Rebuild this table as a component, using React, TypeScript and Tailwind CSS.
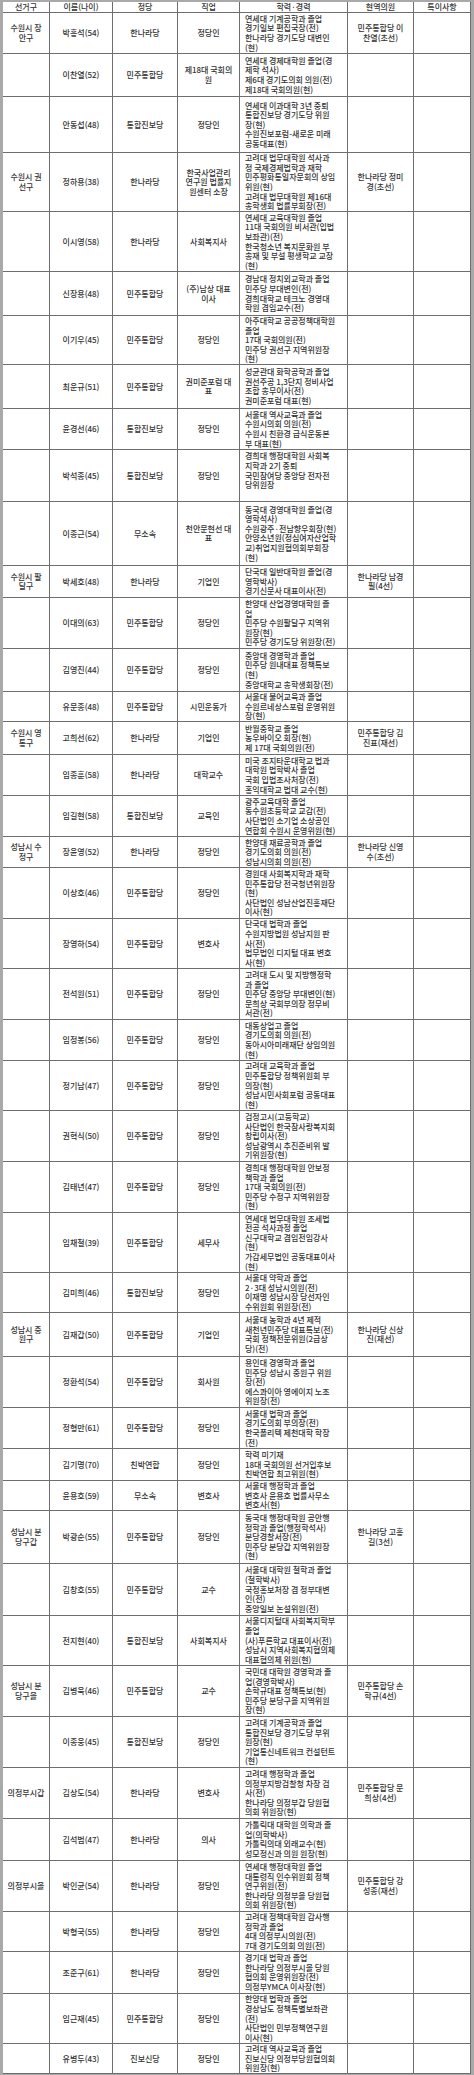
import React from "react";

type Row = {
  h: number;
  d?: string[];
  n: string;
  p: string;
  j: string[];
  e: string[];
  c?: string[];
};

const rows: Row[] = [
  { h: 41, d: ["수원시 장", "안구"], n: "박흥석(54)", p: "한나라당", j: ["정당인"], e: ["연세대 기계공학과 졸업", "경기일보 편집국장(전)", "한나라당 경기도당 대변인", "(현)"], c: ["민주통합당 이", "찬열(초선)"] },
  { h: 43, n: "이찬열(52)", p: "민주통합당", j: ["제18대 국회의", "원"], e: ["연세대 경제대학원 졸업(경", "제학 석사)", "제6대 경기도의회 의원(전)", "제18대 국회의원(현)"] },
  { h: 56, n: "안동섭(48)", p: "통합진보당", j: ["정당인"], e: ["연세대 이과대학 3년 중퇴", "통합진보당 경기도당 위원", "장(현)", "수원진보포럼-새로운 미래", "공동대표(현)"] },
  { h: 59, d: ["수원시 권", "선구"], n: "정하용(38)", p: "한나라당", j: ["한국사업관리", "연구원 법률지", "원센터 소장"], e: ["고려대 법무대학원 석사과", "정 국제경제법학과 재학", "민주평화통일자문회의 상임", "위원(현)", "고려대 법무대학원 제16대", "총학생회 법률부회장(전)"], c: ["한나라당 정미", "경(초선)"] },
  { h: 60, n: "이시영(58)", p: "한나라당", j: ["사회복지사"], e: ["연세대 교육대학원 졸업", "11대 국회의원 비서관(입법", "보좌관)(전)", "한국청소년 복지문화원 부", "총재 및 부설 평생학교 교장", "(현)"] },
  { h: 44, n: "신장용(48)", p: "민주통합당", j: ["(주)남상 대표", "이사"], e: ["경남대 정치외교학과 졸업", "민주당 부대변인(전)", "경희대학교 테크노 경영대", "학원 겸임교수(전)"] },
  { h: 47, n: "이기우(45)", p: "민주통합당", j: ["정당인"], e: ["아주대학교 공공정책대학원", "졸업", "17대 국회의원(전)", "민주당 권선구 지역위원장", "(현)"] },
  { h: 44, n: "최운규(51)", p: "민주통합당", j: ["권미준포럼 대", "표"], e: ["성균관대 화학공학과 졸업", "권선주공 1,3단지 정비사업", "조합 총무이사(전)", "권미준포럼 대표(현)"] },
  { h: 41, n: "윤경선(46)", p: "통합진보당", j: ["정당인"], e: ["서울대 역사교육과 졸업", "수원시의회 의원(전)", "수원시 친환경 급식운동본", "부 대표(현)"] },
  { h: 52, n: "박석종(45)", p: "통합진보당", j: ["정당인"], e: ["경희대 행정대학원 사회복", "지학과 2기 중퇴", "국민참여당 중앙당 전자전", "당위원장", "\u00a0"] },
  { h: 64, n: "이종근(54)", p: "무소속", j: ["천안문현선 대", "표"], e: ["동국대 경영대학원 졸업(경", "영학석사)", "수원광주·전남향우회장(현)", "안양소년원(정심여자산업학", "교)취업지원협의회부회장", "(현)"] },
  { h: 32, d: ["수원시 팔", "달구"], n: "박세호(48)", p: "한나라당", j: ["기업인"], e: ["단국대 일반대학원 졸업(경", "영학박사)", "경기신문사 대표이사(전)"], c: ["한나라당 남경", "필(4선)"] },
  { h: 51, n: "이대의(63)", p: "민주통합당", j: ["정당인"], e: ["한양대 산업경영대학원 졸", "업", "민주당 수원팔달구 지역위", "원장(현)", "민주당 경기도당 위원장(전)"] },
  { h: 43, n: "김영진(44)", p: "민주통합당", j: ["정당인"], e: ["중앙대 경영학과 졸업", "민주당 원내대표 정책특보", "(현)", "중앙대학교 총학생회장(전)"] },
  { h: 30, n: "유문종(48)", p: "민주통합당", j: ["시민운동가"], e: ["서울대 불어교육과 졸업", "수원르네상스포럼 운영위원", "장(현)"] },
  { h: 33, d: ["수원시 영", "통구"], n: "고희선(62)", p: "한나라당", j: ["기업인"], e: ["반월중학교 졸업", "농우바이오 회장(현)", "제 17대 국회의원(전)"], c: ["민주통합당 김", "진표(재선)"] },
  { h: 41, n: "임종훈(58)", p: "한나라당", j: ["대학교수"], e: ["미국 조지타운대학교 법과", "대학원 법학박사 졸업", "국회 입법조사처장(전)", "홍익대학교 법대 교수(현)"] },
  { h: 41, n: "임길현(58)", p: "통합진보당", j: ["교육인"], e: ["광주교육대학 졸업", "동수원초등학교 교감(전)", "사단법인 소기업 소상공인", "연합회 수원시 운영위원(현)"] },
  { h: 31, d: ["성남시 수", "정구"], n: "장윤영(52)", p: "한나라당", j: ["정당인"], e: ["한양대 재료공학과 졸업", "경기도의회 의원(전)", "성남시의회 의원(전)"], c: ["한나라당 신영", "수(초선)"] },
  { h: 51, n: "이상호(46)", p: "민주통합당", j: ["정당인"], e: ["경원대 사회복지학과 재학", "민주통합당 전국청년위원장", "(현)", "사단법인 성남산업진흥재단", "이사(현)"] },
  { h: 50, n: "장영하(54)", p: "민주통합당", j: ["변호사"], e: ["단국대 법학과 졸업", "수원지방법원 성남지원 판", "사(전)", "법무법인 디지털 대표 변호", "사(현)"] },
  { h: 51, n: "전석원(51)", p: "민주통합당", j: ["정당인"], e: ["고려대 도시 및 지방행정학", "과 졸업", "민주당 중앙당 부대변인(현)", "문희상 국회부의장 정무비", "서관(전)"] },
  { h: 41, n: "임정봉(56)", p: "민주통합당", j: ["정당인"], e: ["대동상업고 졸업", "경기도의회 의원(전)", "동아시아미래재단 상임의원", "(현)"] },
  { h: 50, n: "정기남(47)", p: "민주통합당", j: ["정당인"], e: ["고려대 교육학과 졸업", "민주통합당 정책위원회 부", "의장(현)", "성남시민사회포럼 공동대표", "(현)"] },
  { h: 51, n: "권혁식(50)", p: "민주통합당", j: ["정당인"], e: ["검정고시(고등학교)", "사단법인 한국참사랑복지회", "창립이사(전)", "성남광역시 추진준비위 발", "기위원장(현)"] },
  { h: 51, n: "김태년(47)", p: "민주통합당", j: ["정당인"], e: ["경희대 행정대학원 안보정", "책학과 졸업", "17대 국회의원(전)", "민주당 수정구 지역위원장", "(현)"] },
  { h: 60, n: "임채철(39)", p: "민주통합당", j: ["세무사"], e: ["연세대 법무대학원 조세법", "전공 석사과정 졸업", "신구대학교 겸임전임강사", "(현)", "가감세무법인 공동대표이사", "(현)"] },
  { h: 40, n: "김미희(46)", p: "통합진보당", j: ["정당인"], e: ["서울대 약학과 졸업", "2·3대 성남시의원(전)", "이재명 성남시장 당선자인", "수위원회 위원장(전)"] },
  { h: 44, d: ["성남시 중", "원구"], n: "김재갑(50)", p: "민주통합당", j: ["기업인"], e: ["서울대 농학과 4년 제적", "새천년민주당 대표특보(전)", "국회 정책전문위원(2급상", "당)(전)"], c: ["한나라당 신상", "진(재선)"] },
  { h: 51, n: "정환석(54)", p: "민주통합당", j: ["회사원"], e: ["용인대 경영학과 졸업", "민주당 성남시 중원구 위원", "장(전)", "에스콰이아 영에이지 노조", "위원장(전)"] },
  { h: 41, n: "정형만(61)", p: "민주통합당", j: ["정당인"], e: ["서울대 법학과 졸업", "경기도의회 부의장(전)", "한국폴리텍 제천대학 학장", "(전)"] },
  { h: 32, n: "김기명(70)", p: "친박연합", j: ["정당인"], e: ["학력 미기재", "18대 국회의원 선거입후보", "친박연합 최고위원(현)"] },
  { h: 30, n: "윤용호(59)", p: "무소속", j: ["변호사"], e: ["서울대 행정학과 졸업", "변호사 윤용호 법률사무소", "변호사(현)"] },
  { h: 53, d: ["성남시 분", "당구갑"], n: "박광순(55)", p: "민주통합당", j: ["정당인"], e: ["동국대 행정대학원 공안행", "정학과 졸업(행정학석사)", "분당경찰서장(전)", "민주당 분당갑 지역위원장", "(현)"], c: ["한나라당 고흥", "길(3선)"] },
  { h: 52, n: "김창호(55)", p: "민주통합당", j: ["교수"], e: ["서울대 대학원 철학과 졸업", "(철학박사)", "국정홍보처장 겸 정부대변", "인(전)", "중앙일보 논설위원(전)"] },
  { h: 50, n: "전지현(40)", p: "통합진보당", j: ["사회복지사"], e: ["서울디지털대 사회복지학부", "졸업", "(사)푸른학교 대표이사(전)", "성남시 지역사회복지협의체", "대표협의체 위원(현)"] },
  { h: 51, d: ["성남시 분", "당구을"], n: "김병욱(46)", p: "민주통합당", j: ["교수"], e: ["국민대 대학원 경영학과 졸", "업(경영학박사)", "손학규대표 정책특보(현)", "민주당 분당구을 지역위원", "장(현)"], c: ["민주통합당 손", "학규(4선)"] },
  { h: 51, n: "이종웅(45)", p: "통합진보당", j: ["정당인"], e: ["고려대 기계공학과 졸업", "통합진보당 경기도당 부위", "원장(현)", "기업통신네트워크 컨설턴트", "(현)"] },
  { h: 51, d: ["의정부시갑"], n: "김상도(54)", p: "한나라당", j: ["변호사"], e: ["고려대 행정학과 졸업", "의정부지방검찰청 차장 검", "사(전)", "한나라당 의정부갑 당원협", "의회 위원장(현)"], c: ["민주통합당 문", "희상(4선)"] },
  { h: 42, n: "김석범(47)", p: "한나라당", j: ["의사"], e: ["가톨릭대 대학원 의학과 졸", "업(의학박사)", "가톨릭의대 외래교수(현)", "성모정신과 의원 원장(현)"] },
  { h: 51, d: ["의정부시을"], n: "박인균(54)", p: "한나라당", j: ["정당인"], e: ["연세대 행정대학원 졸업", "대통령직 인수위원회 정책", "연구위원(전)", "한나라당 의정부을 당원협", "의회 위원장(현)"], c: ["민주통합당 강", "성종(재선)"] },
  { h: 40, n: "박형국(55)", p: "한나라당", j: ["정당인"], e: ["고려대 정책대학원 감사행", "정학과 졸업", "4대 의정부시의원(전)", "7대 경기도의회 의원(전)"] },
  { h: 42, n: "조준구(61)", p: "한나라당", j: ["정당인"], e: ["경기대 법학과 졸업", "한나라당 의정부시을 당원", "협의회 운영위원장(전)", "의정부YMCA 이사장(현)"] },
  { h: 50, n: "임근재(45)", p: "민주통합당", j: ["정당인"], e: ["한양대 법학과 졸업", "경상남도 정책특별보좌관", "(전)", "사단법인 민부정책연구원", "이사(현)"] },
  { h: 30, n: "유병두(43)", p: "진보신당", j: ["정당인"], e: ["고려대 역사교육과 졸업", "진보신당 의정부당원협의회", "위원장(현)"] },
];

function Lines({ items }: { items?: string[] }) {
  if (!items) return null;
  return (
    <>
      {items.map((t, i) => (
        <div key={i} className="whitespace-nowrap">
          {t}
        </div>
      ))}
    </>
  );
}

const cell =
  "border-r border-b border-[#6e6e6e] p-0 align-middle text-center overflow-hidden";

export default function App() {
  const headers = ["선거구", "이름(나이)", "정당", "직업", "학력·경력", "현역의원", "특이사항"];
  return (
    <div className="w-[474px] h-[2075px] overflow-hidden bg-white font-['Noto_Sans_CJK_KR','Noto_Sans_CJK_SC',sans-serif] text-[8px] leading-[9.6px] font-medium text-[#333333]">
      <div className="border-x-[3px] border-y-[2px] border-[#a9a9a9]">
        <table className="w-[468px] table-fixed border-separate border-spacing-0">
          <colgroup>
            <col className="w-[47px]" />
            <col className="w-[63px]" />
            <col className="w-[65px]" />
            <col className="w-[62px]" />
            <col className="w-[108px]" />
            <col className="w-[66px]" />
            <col className="w-[57px]" />
          </colgroup>
          <thead>
            <tr className="h-[11px]">
              {headers.map((h) => (
                <th key={h} className={cell + " font-medium whitespace-nowrap"}>
                  {h}
                </th>
              ))}
            </tr>
          </thead>
          <tbody>
            {rows.map((r, i) => (
              <tr key={i} style={{ height: r.h }}>
                <td className={cell}>
                  <Lines items={r.d} />
                </td>
                <td className={cell}>
                  <div className="whitespace-nowrap">{r.n}</div>
                </td>
                <td className={cell}>
                  <div className="whitespace-nowrap">{r.p}</div>
                </td>
                <td className={cell}>
                  <Lines items={r.j} />
                </td>
                <td className="border-r border-b border-[#6e6e6e] p-0 pl-[5px] align-middle text-left">
                  <Lines items={r.e} />
                </td>
                <td className={cell}>
                  <Lines items={r.c} />
                </td>
                <td className={cell}></td>
              </tr>
            ))}
          </tbody>
        </table>
      </div>
    </div>
  );
}
